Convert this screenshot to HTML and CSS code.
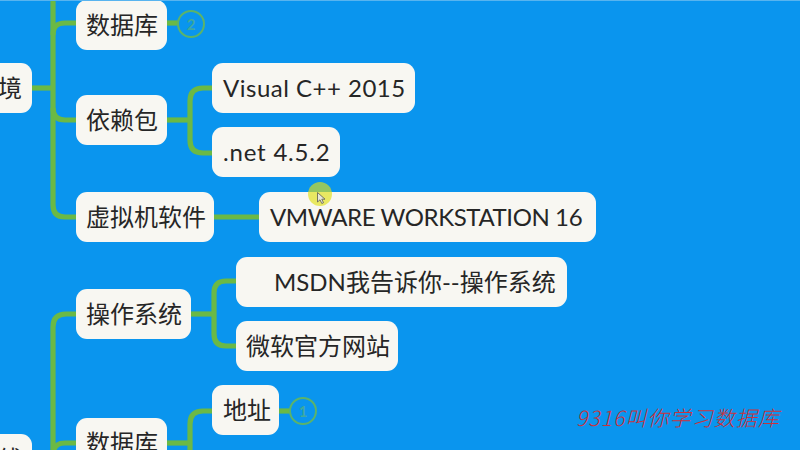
FILE: index.html
```html
<!DOCTYPE html>
<html lang="zh-CN">
<head>
<meta charset="utf-8">
<title>Mind map</title>
<link rel="stylesheet" href="styles.css">
</head>
<body>
<main class="canvas">
  <svg class="links" width="800" height="450" viewBox="0 0 800 450" fill="none">
    <g class="link">
      <path d="M30 88H53"/>
      <path d="M53 0V205Q53 217 65 217H80"/>
      <path d="M53 35Q53 23 65 23H80"/>
      <path d="M53 108Q53 120 65 120H80"/>
      <path d="M165 120H190"/>
      <path d="M215 88H203Q190 88 190 101V140Q190 153 203 153H215"/>
      <path d="M165 23H178"/>
      <path d="M212 217H262"/>
      <path d="M188 314H214"/>
      <path d="M238 281H226Q214 281 214 293V334Q214 346 226 346H238"/>
      <path d="M80 314H66Q53 314 53 327V450"/>
      <path d="M53 455Q53 443 65 443H80"/>
      <path d="M165 443H190"/>
      <path d="M215 411H203Q190 411 190 424V450"/>
      <path d="M278 411H290"/>
    </g>
    <circle class="badge-ring" cx="191" cy="24" r="13"/>
    <circle class="badge-ring" cx="303" cy="411" r="13"/>
    <text class="badge-num" x="191" y="29.500">2</text>
    <text class="badge-num" x="303" y="416.500">1</text>
  </svg>

  <div class="node n-env">境</div>
  <div class="node n-db1">数据库</div>
  <div class="node n-dep">依赖包</div>
  <div class="node n-vm">虚拟机软件</div>
  <div class="node n-vc">Visual C++ 2015</div>
  <div class="node n-net">.net 4.5.2</div>
  <div class="node n-vmw">VMWARE WORKSTATION 16</div>
  <div class="node n-os">操作系统</div>
  <div class="node n-msdn">MSDN我告诉你--操作系统</div>
  <div class="node n-ms">微软官方网站</div>
  <div class="node n-addr">地址</div>
  <div class="node n-db2">数据库</div>
  <div class="node n-bottom">线</div>

  <div class="pointer">
    <svg class="cursor-icon" width="10" height="14" viewBox="0 0 10 14"><path class="cursor" d="M1.500 1.500V11L4 8.800 5.800 12.500 7.500 11.700 5.800 8.200H9Z"/></svg>
  </div>

  <div class="watermark">9316叫你学习数据库</div>
</main>
</body>
</html>
```
FILE: styles.css
```css
html, body {
  margin: 0;
  padding: 0;
  width: 800px;
  height: 450px;
  overflow: hidden;
}

.canvas {
  position: relative;
  width: 800px;
  height: 450px;
  overflow: hidden;
  background: #0a95ee;
  border-top: 1px solid #58b4ef;
  box-sizing: border-box;
  font-family: "Lato", "Noto Sans CJK SC", sans-serif;
  color: #262626;
}

.links {
  position: absolute;
  left: 0;
  top: -1px;
}

.link path {
  stroke: #6bb945;
  stroke-width: 5.200;
}

.badge-ring {
  stroke: #5bb36a;
  stroke-width: 2;
}

.badge-num {
  fill: #3ea9a0;
  font-size: 15px;
  font-weight: 700;
  text-anchor: middle;
}

.node {
  position: absolute;
  box-sizing: border-box;
  height: 50px;
  line-height: 50px;
  padding: 0 10px;
  background: #f8f7f2;
  border-radius: 11px;
  font-size: 24px;
  white-space: nowrap;
}

.n-env    { left: -30px; top: 62px;  width: 62px; text-align: right; padding: 0 10px 0 0; }
.n-db1    { left: 76px;  top: -1px;  width: 91px; }
.n-dep    { left: 76px;  top: 94px;  width: 91px; }
.n-vm     { left: 76px;  top: 191px; width: 138px; }
.n-vc     { left: 212px; top: 62px;  width: 203px; padding-left: 11px; letter-spacing: 0.5px; }
.n-net    { left: 212px; top: 126px; width: 128px; padding-left: 11px; letter-spacing: 0.8px; }
.n-vmw    { left: 259px; top: 191px; width: 337px; padding-left: 11px; letter-spacing: -0.4px; }
.n-os     { left: 76px;  top: 288px; width: 115px; }
.n-msdn   { left: 236px; top: 256px; width: 331px; padding-left: 38px; }
.n-ms     { left: 236px; top: 320px; width: 162px; }
.n-addr   { left: 212px; top: 384px; width: 67px; padding-left: 11px; }
.n-db2    { left: 76px;  top: 417px; width: 91px; }
.n-bottom { left: -30px; top: 433px; width: 62px; text-align: right; padding: 0 10px 0 0; }

.pointer {
  position: absolute;
  left: 308px;
  top: 181px;
  width: 24px;
  height: 24px;
  border-radius: 50%;
  background: rgba(225, 225, 20, 0.65);
}

.cursor-icon {
  position: absolute;
  left: 8px;
  top: 9px;
}

.cursor {
  fill: #e8e8d8;
  stroke: #5a5a50;
  stroke-width: 0.800;
}

.watermark {
  position: absolute;
  left: 576px;
  top: 399px;
  font-family: "Noto Sans CJK SC", sans-serif;
  font-size: 21px;
  line-height: 34px;
  font-weight: 300;
  font-style: italic;
  letter-spacing: 1.100px;
  color: #c8323c;
  white-space: nowrap;
}
```
